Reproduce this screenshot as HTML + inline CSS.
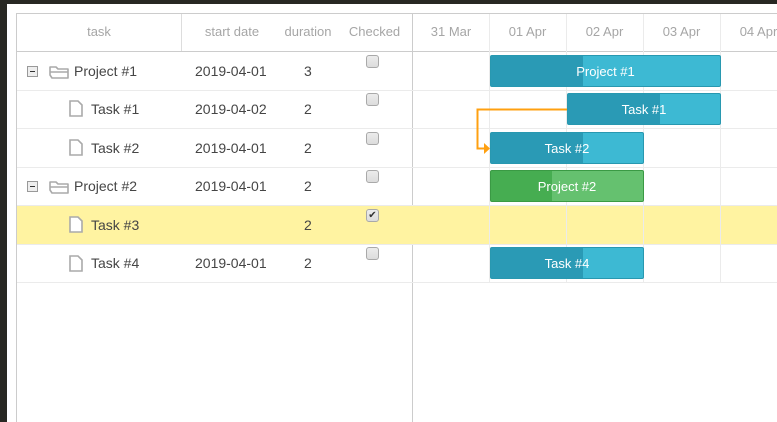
<!DOCTYPE html><html><head><style>
*{margin:0;padding:0;box-sizing:border-box}
body{width:777px;height:422px;background:#282823;position:relative;overflow:hidden;font-family:"Liberation Sans",sans-serif}
.a{position:absolute}
.wh{left:7px;top:4px;width:770px;height:418px;background:#fff}
.h{color:#a6a6a6;font-size:13px;text-align:center;line-height:38px;top:13px;height:38px}
.t{color:#454545;font-size:14px;line-height:38px}
.hl{background:#ccc}
.gl{background:#ebebeb}
.bar{height:32px;border-radius:2px;color:#fff;font-size:13px;text-align:center;line-height:32px;border:1px solid #2898b0}
.cb{width:13px;height:13px;border:1px solid #a9a9a9;border-radius:3px;background:linear-gradient(#ececec,#dcdcdc);left:366px}
</style></head><body>
<div class="a wh"></div>
<div class="a hl" style="left:16px;top:13px;width:761px;height:1px"></div>
<div class="a hl" style="left:16px;top:13px;width:1px;height:409px"></div>
<div class="a hl" style="left:412px;top:13px;width:1px;height:409px"></div>
<div class="a hl" style="left:16px;top:51px;width:761px;height:1px"></div>
<div class="a gl" style="left:181px;top:14px;width:1px;height:37px;background:#ddd"></div>
<div class="a" style="left:17px;top:206px;width:760px;height:38px;background:#fff3a1"></div>
<div class="a gl" style="left:17px;top:90px;width:760px;height:1px"></div>
<div class="a gl" style="left:17px;top:128px;width:760px;height:1px"></div>
<div class="a gl" style="left:17px;top:167px;width:760px;height:1px"></div>
<div class="a gl" style="left:17px;top:205px;width:760px;height:1px"></div>
<div class="a gl" style="left:17px;top:244px;width:760px;height:1px"></div>
<div class="a gl" style="left:17px;top:282px;width:760px;height:1px"></div>
<div class="a gl" style="left:489px;top:14px;width:1px;height:268px"></div>
<div class="a gl" style="left:566px;top:14px;width:1px;height:268px"></div>
<div class="a gl" style="left:643px;top:14px;width:1px;height:268px"></div>
<div class="a gl" style="left:720px;top:14px;width:1px;height:268px"></div>
<div class="a h" style="left:17px;width:164px">task</div>
<div class="a h" style="left:182px;width:100px">start date</div>
<div class="a h" style="left:275px;width:66px">duration</div>
<div class="a h" style="left:337px;width:75px">Checked</div>
<div class="a h" style="left:413px;width:76px">31 Mar</div>
<div class="a h" style="left:489px;width:77px">01 Apr</div>
<div class="a h" style="left:566px;width:77px">02 Apr</div>
<div class="a h" style="left:643px;width:77px">03 Apr</div>
<div class="a h" style="left:720px;width:77px">04 Apr</div>
<div class="a t" style="left:74px;top:52px">Project #1</div>
<div class="a t" style="left:91px;top:90px">Task #1</div>
<div class="a t" style="left:91px;top:129px">Task #2</div>
<div class="a t" style="left:74px;top:167px">Project #2</div>
<div class="a t" style="left:91px;top:206px">Task #3</div>
<div class="a t" style="left:91px;top:244px">Task #4</div>
<div class="a t" style="left:195px;top:52px">2019-04-01</div>
<div class="a t" style="left:195px;top:90px">2019-04-02</div>
<div class="a t" style="left:195px;top:129px">2019-04-01</div>
<div class="a t" style="left:195px;top:167px">2019-04-01</div>
<div class="a t" style="left:195px;top:244px">2019-04-01</div>
<div class="a t" style="left:304px;top:52px">3</div>
<div class="a t" style="left:304px;top:90px">2</div>
<div class="a t" style="left:304px;top:129px">2</div>
<div class="a t" style="left:304px;top:167px">2</div>
<div class="a t" style="left:304px;top:206px">2</div>
<div class="a t" style="left:304px;top:244px">2</div>
<div class="a cb" style="top:55px"></div>
<div class="a cb" style="top:93px"></div>
<div class="a cb" style="top:132px"></div>
<div class="a cb" style="top:170px"></div>
<div class="a cb" style="top:209px;font-size:10px;line-height:11px;text-align:center;color:#333">✔</div>
<div class="a cb" style="top:247px"></div>
<svg class="a" style="left:0;top:0" width="420" height="290">
<g fill="none" stroke="#999" stroke-width="1">
<rect x="27.5" y="66.5" width="10" height="10" fill="#eee"/><line x1="30" y1="71.5" x2="35" y2="71.5" stroke="#333"/>
<rect x="27.5" y="181.5" width="10" height="10" fill="#eee"/><line x1="30" y1="186.5" x2="35" y2="186.5" stroke="#333"/>
<g stroke="#aaa" stroke-width="1.6" stroke-linejoin="round">
<path d="M50 75V67h6l2 2h10v9H52z M50 72h18"/>
<path d="M50 190V182h6l2 2h10v9H52z M50 187h18"/>
</g>
<g stroke="#aaa" stroke-width="1.6" fill="#fff">
<path d="M70 101v15h12v-11l-4-4z"/>
<path d="M70 140v15h12v-11l-4-4z"/>
<path d="M70 217v15h12v-11l-4-4z"/>
<path d="M70 256v15h12v-11l-4-4z"/>
</g></g>
</svg>
<div class="a bar" style="left:490px;top:55px;width:231px;background:linear-gradient(90deg,#2a9ab5 92px,#3db9d3 92px)">Project #1</div>
<div class="a bar" style="left:567px;top:93px;width:154px;background:linear-gradient(90deg,#2a9ab5 92px,#3db9d3 92px)">Task #1</div>
<div class="a bar" style="left:490px;top:132px;width:154px;background:linear-gradient(90deg,#2a9ab5 92px,#3db9d3 92px)">Task #2</div>
<div class="a bar" style="left:490px;top:170px;width:154px;border-color:#3a9a44;background:linear-gradient(90deg,#46ad51 61px,#65c16f 61px)">Project #2</div>
<div class="a bar" style="left:490px;top:247px;width:154px;background:linear-gradient(90deg,#2a9ab5 92px,#3db9d3 92px)">Task #4</div>
<svg class="a" style="left:470px;top:100px" width="100" height="60">
<path d="M97 9.5H7.5V48.5H14" fill="none" stroke="#ffa011" stroke-width="2"/>
<path d="M14 43l6 5.5-6 5.5z" fill="#ffa011"/>
</svg>
</body></html>
